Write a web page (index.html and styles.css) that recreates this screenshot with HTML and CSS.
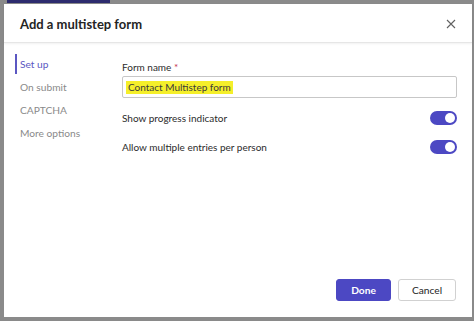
FILE: index.html
```html
<!DOCTYPE html>
<html lang="en">
<head>
  <meta charset="UTF-8">
  <meta name="viewport" content="width=device-width, initial-scale=1.0">
  <title>Add a multistep form</title>
  <link rel="stylesheet" href="styles.css">
</head>
<body>
  <div class="frame-top"><div class="tab-bar"></div></div>

  <div class="dialog">
    <div class="dialog-header">
      <h1>Add a multistep form</h1>
      <button class="close" aria-label="Close">
        <svg width="10" height="10" viewBox="0 0 10 10"><path d="M1 1 L9 9 M9 1 L1 9" stroke="#616161" stroke-width="1.1" fill="none"/></svg>
      </button>
    </div>

    <div class="dialog-body">
      <ul class="steps">
        <li class="active">Set up</li>
        <li>On submit</li>
        <li>CAPTCHA</li>
        <li>More options</li>
      </ul>

      <div class="content">
        <label class="field-label">Form name <span class="req">*</span></label>
        <div class="input"><span class="mark">Contact Multistep form</span></div>

        <div class="toggle-row first">
          <span>Show progress indicator</span>
          <span class="toggle"></span>
        </div>
        <div class="toggle-row">
          <span>Allow multiple entries per person</span>
          <span class="toggle"></span>
        </div>
      </div>
    </div>

    <div class="dialog-footer">
      <button class="btn primary">Done</button>
      <button class="btn">Cancel</button>
    </div>
  </div>
</body>
</html>
```

FILE: styles.css
```css
body {
  margin: 0;
  background: #8a8a8a;
  padding: 0 2px 4px 4px;
  font-family: Lato, "Open Sans", sans-serif;
  color: #242424;
}
.frame-top {
  height: 4px;
}
.tab-bar {
  width: 103px;
  height: 3px;
  margin-left: 3px;
  background: #2d2b6e;
}
.dialog {
  background: #fff;
  height: 313px;
  display: flex;
  flex-direction: column;
}
.dialog-header {
  height: 39px;
  display: flex;
  align-items: center;
  justify-content: space-between;
  padding: 1px 16px 0 16px;
  box-sizing: border-box;
  border-bottom: 1px solid #e6e6e6;
  box-shadow: 0 1px 2px rgba(0, 0, 0, 0.06);
}
h1 {
  margin: 0;
  font-size: 13px;
  font-weight: 700;
}
.close {
  border: 0;
  background: none;
  padding: 0;
  display: flex;
}
.dialog-body {
  display: flex;
  padding-top: 11px;
}
.steps {
  list-style: none;
  margin: 0;
  padding: 0;
  width: 107px;
  margin-left: 11px;
}
.steps li {
  font-size: 10.2px;
  color: #8a8a8a;
  line-height: 20px;
  margin-bottom: 3px;
  padding-left: 3px;
  border-left: 2px solid transparent;
}
.steps li.active {
  color: #5b57c2;
  border-left-color: #5b57c2;
}
.content {
  flex: 1;
  padding-right: 15px;
  font-size: 10px;
  color: #2b2b2b;
}
.field-label {
  display: block;
  line-height: 16px;
  margin-top: 5px;
}
.req {
  color: #c4314b;
}
.input {
  margin-top: 1px;
  height: 22px;
  border: 1px solid #c7c7c7;
  border-radius: 2px;
  box-sizing: border-box;
  display: flex;
  align-items: center;
  padding-left: 3px;
}
.mark {
  background: #f5ef2a;
  padding: 0 2px;
  line-height: 13px;
  color: #3a3a3a;
}
.toggle-row {
  display: flex;
  justify-content: space-between;
  align-items: center;
  height: 29px;
}
.toggle-row.first {
  margin-top: 5px;
}
.toggle {
  width: 27px;
  height: 14px;
  border-radius: 7px;
  background: #4c48c3;
  position: relative;
}
.toggle::after {
  content: "";
  position: absolute;
  right: 2px;
  top: 2px;
  width: 10px;
  height: 10px;
  border-radius: 50%;
  background: #fff;
}
.dialog-footer {
  margin-top: auto;
  display: flex;
  justify-content: flex-end;
  gap: 7px;
  padding: 0 16px 16px 0;
}
.btn {
  font-family: Lato, "Open Sans", sans-serif;
  font-size: 10.2px;
  height: 22px;
  width: 58px;
  border: 1px solid #d1d1d1;
  border-radius: 3px;
  background: #fff;
  color: #242424;
}
.btn.primary {
  width: 55px;
  background: #4c48c3;
  border-color: #4c48c3;
  color: #fff;
  font-weight: 700;
}
```
